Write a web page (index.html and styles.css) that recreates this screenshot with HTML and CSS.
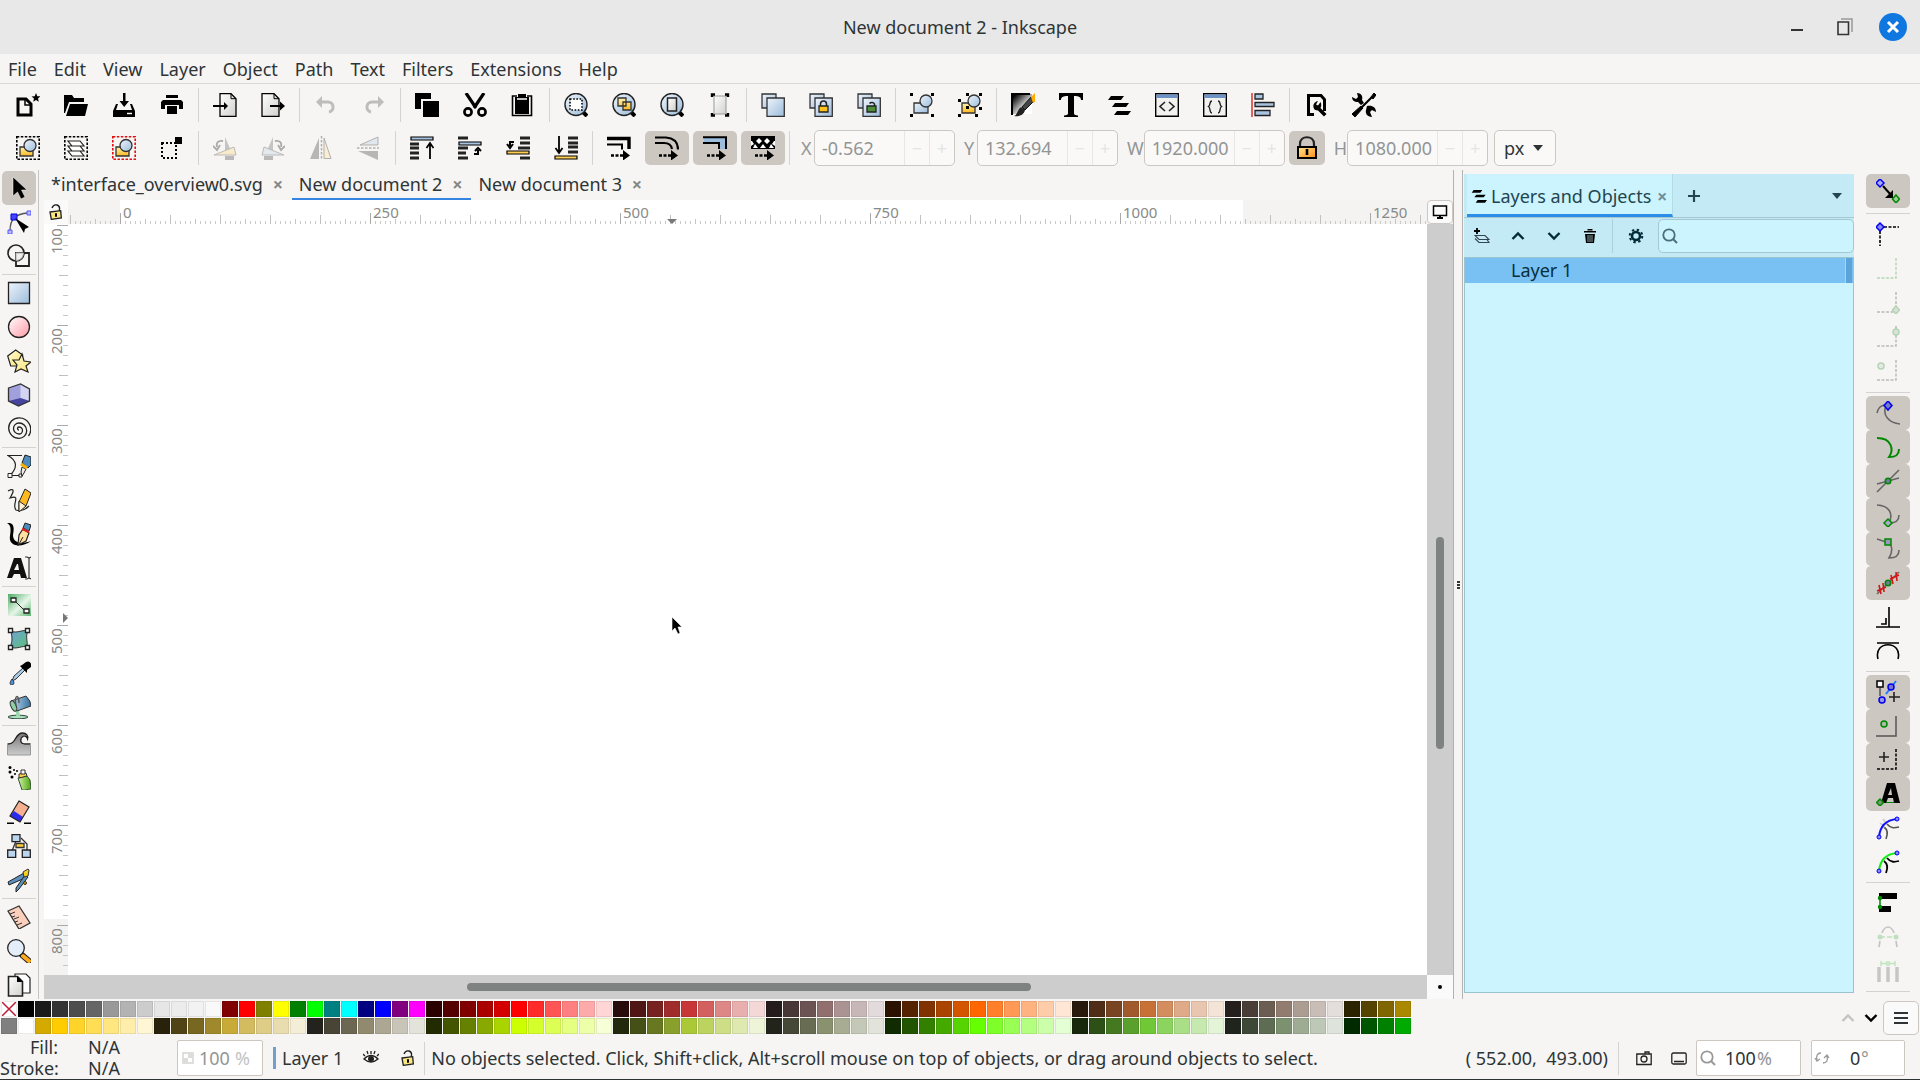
FILE: index.html
```html
<!DOCTYPE html>
<html lang="en">
<head>
  <meta charset="utf-8">
  <title>New document 2 - Inkscape</title>
  <link rel="stylesheet" href="styles.css">
</head>
<body>
  <svg class="defs" aria-hidden="true">
    <defs>
      <linearGradient id="gBlue" x1="0" y1="0" x2="1" y2="1"><stop offset="0" stop-color="#eef4fb"/><stop offset="1" stop-color="#9cbcdc"/></linearGradient>
      <linearGradient id="gPaper" x1="0" y1="0" x2="1" y2="1"><stop offset="0" stop-color="#fff"/><stop offset="1" stop-color="#d0d0cc"/></linearGradient>
      <linearGradient id="gPink" x1="0" y1="0" x2="1" y2="1"><stop offset="0" stop-color="#fff"/><stop offset="1" stop-color="#ff98a4"/></linearGradient>
      <linearGradient id="gGold" x1="0" y1="0" x2="0" y2="1"><stop offset="0" stop-color="#fff3b0"/><stop offset="1" stop-color="#ffb81c"/></linearGradient>
      <linearGradient id="gLock" x1="0" y1="0" x2="1" y2="1"><stop offset="0" stop-color="#ffe98a"/><stop offset="1" stop-color="#ff8c1a"/></linearGradient>
      <linearGradient id="gYel" x1="0" y1="0" x2="1" y2="1"><stop offset="0" stop-color="#fffbe0"/><stop offset="1" stop-color="#fbe36a"/></linearGradient>
      <linearGradient id="gGreen" x1="0" y1="0" x2="1" y2="1"><stop offset="0" stop-color="#4aae62"/><stop offset=".55" stop-color="#e8f6ea"/><stop offset="1" stop-color="#5cb870"/></linearGradient>
      <linearGradient id="gMesh" x1="0" y1="0" x2="1" y2="1"><stop offset="0" stop-color="#6fa3d8"/><stop offset="1" stop-color="#5cc07a"/></linearGradient>
      <linearGradient id="gPot" x1="0" y1="0" x2="1" y2="0"><stop offset="0" stop-color="#c3dcee"/><stop offset="1" stop-color="#34709f"/></linearGradient>
      <linearGradient id="gCan" x1="0" y1="0" x2="1" y2="0"><stop offset="0" stop-color="#d6f0b0"/><stop offset="1" stop-color="#4da80c"/></linearGradient>
      <linearGradient id="gGrey" x1="0" y1="0" x2="0" y2="1"><stop offset="0" stop-color="#777"/><stop offset="1" stop-color="#ccc"/></linearGradient>
      <linearGradient id="gInk" x1="1" y1="1" x2="0" y2="0"><stop offset=".3" stop-color="#fff"/><stop offset=".9" stop-color="#000"/></linearGradient>
    </defs>

    <symbol id="new" viewBox="0 0 24 24"><path d="M2 6h8l5 5v11H2z" fill="none" stroke="#000" stroke-width="3"/><path d="M9 5v7h7" fill="none" stroke="#000" stroke-width="1.5"/><path d="M20 0l1.3 3.2 3.2.2-2.5 2 .8 3.3L20 6.9l-2.8 1.8.8-3.3-2.5-2 3.2-.2z"/></symbol>
    <symbol id="open" viewBox="0 0 24 24"><path d="M0 2h8l2 3h10v4H5L1 20H0zM6 11h18l-3 12H2z"/></symbol>
    <symbol id="save" viewBox="0 0 24 24"><path d="M11 0h2.5v8H17l-4.8 6L7.5 8H11zM4 11h2l-2 6h16l-2-6h2l3 7v6H1v-6z"/><path d="M15 20.5h5" stroke="#fff" stroke-width="1.5"/></symbol>
    <symbol id="print" viewBox="0 0 24 24"><path d="M6 2h12v3H6zM3 7h18l2 2v7h-4v-4H5v4H1V9zM7 13h10v8H7z"/></symbol>
    <symbol id="import" viewBox="0 0 24 24"><path d="M7 .7h11l5 5V23.3H7z" fill="url(#gPaper)" stroke="#000" stroke-width="1.3"/><path d="M18 .7v5h5" fill="none" stroke="#000"/><path d="M0 13h12" stroke="#000" stroke-width="2"/><path d="M11 9l4 4-4 4z"/></symbol>
    <symbol id="export" viewBox="0 0 24 24"><path d="M1 .7h12l5 5V23.3H1z" fill="url(#gPaper)" stroke="#000" stroke-width="1.3"/><path d="M13 .7v5h5" fill="none" stroke="#000"/><path d="M9 13h11" stroke="#000" stroke-width="2"/><path d="M19 8.5l5 4.5-5 4.5z"/></symbol>
    <symbol id="undo" viewBox="0 0 24 24"><path d="M5 9h9c6 0 7 9 1 10" fill="none" stroke="#bdbdbb" stroke-width="3"/><path d="M2 9l6-6v12z" fill="#bdbdbb"/></symbol>
    <symbol id="redo" viewBox="0 0 24 24"><path d="M19 9h-9c-6 0-7 9-1 10" fill="none" stroke="#bdbdbb" stroke-width="3"/><path d="M22 9l-6-6v12z" fill="#bdbdbb"/></symbol>
    <symbol id="copy" viewBox="0 0 24 24"><path d="M0 0h16v6H6v10H0zM8 8h16v16H8z"/></symbol>
    <symbol id="cut" viewBox="0 0 24 24"><path d="M3 0l10 15M21 0L11 15" stroke="#000" stroke-width="3.2"/><circle cx="5" cy="19" r="3.6" fill="none" stroke="#000" stroke-width="2.6"/><circle cx="19" cy="19" r="3.6" fill="none" stroke="#000" stroke-width="2.6"/></symbol>
    <symbol id="paste" viewBox="0 0 24 24"><path d="M6 3H1.5v19.5h19V3H16" fill="none" stroke="#000" stroke-width="1.6"/><path d="M7 1h8v3h3v17H4V4h3z"/><path d="M6 6h10" stroke="#fff" stroke-width="1.5"/></symbol>

    <symbol id="lens" viewBox="0 0 24 24"><path d="M18 18l5 5" stroke="#000" stroke-width="4"/><circle cx="12" cy="11.5" r="11" fill="url(#gBlue)" stroke="#222" stroke-width="1.4"/></symbol>
    <symbol id="zoomsel" viewBox="0 0 24 24"><use href="#lens"/><path d="M6 6h12v11H6z" fill="#fff" stroke="#000" stroke-width="1.6" stroke-dasharray="1.6"/></symbol>
    <symbol id="zoomdraw" viewBox="0 0 24 24"><use href="#lens"/><path d="M6 5h8v8H6zM11 9h8v8h-8z" fill="url(#gGold)" stroke="#333" stroke-width="1.3"/></symbol>
    <symbol id="zoompage" viewBox="0 0 24 24"><use href="#lens"/><path d="M7.5 5h9v13h-9z" fill="url(#gPaper)" stroke="#222" stroke-width="1.5"/></symbol>
    <symbol id="pagewidth" viewBox="0 0 24 24"><path d="M6 3h12v18H6z" fill="url(#gPaper)" stroke="#999"/><path d="M4 4V1.5h3M20 4V1.5h-3M4 20v2.5h3M20 20v2.5h-3" fill="none" stroke="#000" stroke-width="2.4"/></symbol>
    <symbol id="dup" viewBox="0 0 24 24"><path d="M1 1h14v14H1z" fill="url(#gBlue)" stroke="#333" stroke-width="1.3"/><path d="M6 5h17.3v18.3H6z" fill="url(#gBlue)" stroke="#333" stroke-width="1.3"/></symbol>
    <symbol id="clone" viewBox="0 0 24 24"><use href="#dup"/><path d="M11.5 13v-2a3 3 0 016 0v2" fill="none" stroke="#222" stroke-width="1.5"/><path d="M10 13h9v6h-9z" fill="#ffc21a" stroke="#222" stroke-width="1.3"/></symbol>
    <symbol id="unclone" viewBox="0 0 24 24"><use href="#dup"/><path d="M12.5 10.5a3 3 0 015 .5v2" fill="none" stroke="#222" stroke-width="1.5"/><path d="M10 13h9v6h-9z" fill="#4e8f34" stroke="#222" stroke-width="1.3"/></symbol>
    <symbol id="corners" viewBox="0 0 24 24"><path d="M0 0h3v3H0zM21 0h3v3h-3zM0 21h3v3H0zM21 21h3v3h-3z"/></symbol>
    <symbol id="group" viewBox="0 0 24 24"><use href="#corners"/><path d="M4 10h14v10H4z" fill="url(#gBlue)" stroke="#333" stroke-width="1.3"/><circle cx="16" cy="8" r="6" fill="url(#gBlue)" stroke="#333" stroke-width="1.3"/></symbol>
    <symbol id="ungroup" viewBox="0 0 24 24"><path d="M8 0h3v3H8zM21 0h3v3h-3zM0 6h3v3H0zM0 21h3v3H0zM17 21h3v3h-3zM21 14h3v3h-3z"/><path d="M4 10h13v10H4z" fill="url(#gGold)" stroke="#333" stroke-width="1.3"/><circle cx="16" cy="8" r="6" fill="url(#gBlue)" stroke="#333" stroke-width="1.3"/><path d="M8 13h3v3H8z"/></symbol>
    <symbol id="fillstroke" viewBox="0 0 24 24"><path d="M1 1h20v20H1z" fill="url(#gInk)"/><path d="M1 22V1h18" fill="none" stroke="#000" stroke-width="2"/><path d="M20 4l3 4-9 9-3-3z" fill="#444" stroke="#111"/><path d="M20 4l4-4v9l-2 1z" fill="#ffac00"/><path d="M3 23c3 0 3-6 7-9l4 3c-1 5-6 7-11 6z" fill="#222"/></symbol>
    <symbol id="text" viewBox="0 0 24 24"><path d="M0 0h24v7h-2c0-3-2-4-7-4v17c0 2 1 2 4 2.5V24H5v-1.5c3-.5 4-.5 4-2.5V3C4 3 2 4 2 7H0z"/></symbol>
    <symbol id="layers" viewBox="0 0 24 24"><path d="M4 3h13l-3 4H1zM8 10h14l-3 4H5zM10 18h14l-3 4H7z"/></symbol>
    <symbol id="win" viewBox="0 0 24 24"><path d="M.7.7h22.6v22.6H.7z" fill="#f1f1ee" stroke="#000" stroke-width="1.4"/><path d="M1.4 1.4h21.2V5H1.4z" fill="#6d93c6"/></symbol>
    <symbol id="xml" viewBox="0 0 24 24"><use href="#win"/><path d="M10 9l-5 4.5 5 4.5M14 9l5 4.5-5 4.5" fill="none" stroke="#222" stroke-width="1.6"/></symbol>
    <symbol id="css" viewBox="0 0 24 24"><use href="#win"/><path d="M9 8C6 8 8 12 5.5 13.5 8 15 6 20 9 20M15 8c3 0 1 4 3.5 5.5C16 15 18 20 15 20" fill="none" stroke="#222" stroke-width="1.4"/></symbol>
    <symbol id="align" viewBox="0 0 24 24"><path d="M1 0v24" stroke="#d22" stroke-width="1.4"/><path d="M4 1h8v5H4zM4 9.5h19v4H4zM4 17.5h15v5H4z" fill="#a9c4e0" stroke="#222" stroke-width="1.3"/></symbol>
    <symbol id="docprefs" viewBox="0 0 24 24"><path d="M10 21.5H4.5v-19H17l3.5 4V18" fill="none" stroke="#000" stroke-width="3"/><path d="M14 8c-5 1-6 6-3 9l3 .5 6 6 2.5-2.5-6-6c1-2 1-4 0-6l-2.5 3.5-2-1z"/></symbol>
    <symbol id="prefs" viewBox="0 0 24 24"><path d="M8 16L20 4" stroke="#000" stroke-width="2.2"/><path d="M0 21l9-8 2 2-8 9zM19 4l3-4 2 2-3 4z" stroke="#000"/><path d="M5 0c5 0 6 4 5 7l2 3-3 2-3-3C2 9 0 7 0 4l4 2 2-2zM15 13c5-1 9 1 9 6l-4-2-2 2 2 5c-5 0-7-4-6-7z"/></symbol>

    <symbol id="dash" viewBox="0 0 24 24"><path d="M.8.8h22.4v22.4H.8z" fill="none" stroke="#000" stroke-width="1.6" stroke-dasharray="2.5 1.5"/></symbol>
    <symbol id="shapes" viewBox="0 0 24 24"><path d="M4 11h13v9H4z" fill="url(#gGold)" stroke="#333" stroke-width="1.3"/><circle cx="14" cy="9.5" r="6" fill="url(#gBlue)" stroke="#333" stroke-width="1.3"/></symbol>
    <symbol id="selall" viewBox="0 0 24 24"><use href="#dash"/><use href="#shapes"/></symbol>
    <symbol id="sellayers" viewBox="0 0 24 24"><use href="#dash"/><path d="M4 15h12l4 5H8zM4 10h12l4 5H8zM4 5h12l4 5H8z" fill="#fff" stroke="#222" stroke-width="1.2"/></symbol>
    <symbol id="touch" viewBox="0 0 24 24"><path d="M.8.8h22.4v22.4H.8z" fill="none" stroke="#e01010" stroke-width="1.6" stroke-dasharray="2.5 1.5"/><use href="#shapes"/></symbol>
    <symbol id="desel" viewBox="0 0 24 24"><path d="M2 7h14v15H2z" fill="none" stroke="#000" stroke-width="2" stroke-dasharray="2"/><path d="M15 1h7v7h-7z"/></symbol>
    <symbol id="rotl" viewBox="0 0 24 24"><g opacity=".3"><path d="M12 1l7 16h-7z" fill="#555"/><path d="M1 19l20-8 2 8z" fill="#ffd76a" stroke="#333"/><path d="M12 20h9v4h-9z" fill="#333"/><path d="M10 5C5 4 3 7 4 11M0 10l4 4 3-5" fill="none" stroke="#000" stroke-width="1.8"/></g></symbol>
    <symbol id="rotr" viewBox="0 0 24 24"><g opacity=".3"><path d="M12 1L5 17h7z" fill="#555"/><path d="M23 19L3 11l-2 8z" fill="#b8cee6" stroke="#333"/><path d="M3 20h9v4H3z" fill="#333"/><path d="M14 5c5-1 7 2 6 6M24 10l-4 4-3-5" fill="none" stroke="#000" stroke-width="1.8"/></g></symbol>
    <symbol id="fliph" viewBox="0 0 24 24"><g opacity=".35"><path d="M10 2v21H1z" fill="#444"/><path d="M15 2v20.5h7z" fill="#ffe39a" stroke="#333"/><path d="M12.5 0v24" stroke="#333" stroke-width="1.5" stroke-dasharray="2.5 1.5"/></g></symbol>
    <symbol id="flipv" viewBox="0 0 24 24"><g opacity=".35"><path d="M21 1v8H3z" fill="#b8cee6" stroke="#333"/><path d="M21 15v9L1 15z" fill="#444"/><path d="M0 12h22" stroke="#333" stroke-width="1.5" stroke-dasharray="2.5 1.5"/></g></symbol>
    <symbol id="top" viewBox="0 0 24 24"><path d="M1 1h22v3H1z" fill="#a9c4e0" stroke="#000" stroke-width="1.2"/><path d="M0 8h9M0 12h9M0 17h9M0 22h9" stroke="#222" stroke-width="2.8"/><path d="M20 8v15M16.5 12L20 7l3.5 5" fill="none" stroke="#000" stroke-width="1.8"/></symbol>
    <symbol id="raise" viewBox="0 0 24 24"><path d="M0 2h10M0 12h10M0 17h8M0 22h10" stroke="#222" stroke-width="2.8"/><path d="M1 6h22v3H1z" fill="#a9c4e0" stroke="#000" stroke-width="1.2"/><path d="M16 18h4v-4M17 15l3-3 3 3" fill="none" stroke="#000" stroke-width="2"/></symbol>
    <symbol id="lower" viewBox="0 0 24 24"><path d="M14 2h10M14 7h10M12 12h12M14 22h10" stroke="#222" stroke-width="2.8"/><path d="M1 15h22v3H1z" fill="#ffcf55" stroke="#000" stroke-width="1.2"/><path d="M8 6H4v4M1 8l3 4 3-4" fill="none" stroke="#000" stroke-width="2"/></symbol>
    <symbol id="bottom" viewBox="0 0 24 24"><path d="M14 2h10M14 7h10M14 11h10M14 16h10" stroke="#222" stroke-width="2.8"/><path d="M1 20h22v3H1z" fill="#ffcf55" stroke="#000" stroke-width="1.2"/><path d="M5 0v16M1.5 12L5 17l3.5-5" fill="none" stroke="#000" stroke-width="1.8"/></symbol>
    <symbol id="arr" viewBox="0 0 24 24"><path d="M4 19.5h13" stroke="#000" stroke-width="2.4" stroke-dasharray="3 1.5"/><path d="M16 14l7 5.5-7 5z"/></symbol>
    <symbol id="scstroke" viewBox="0 0 24 24"><use href="#arr"/><path d="M0 2.5h22V13" fill="none" stroke="#000" stroke-width="3.4"/><path d="M0 8.5h15v5" fill="none" stroke="#000" stroke-width="2"/></symbol>
    <symbol id="sccorner" viewBox="0 0 24 24"><use href="#arr"/><path d="M0 1.5h11q12 1 12 12M0 7h9q7 0 8 6" fill="none" stroke="#000" stroke-width="2.2"/></symbol>
    <symbol id="scgrad" viewBox="0 0 24 24"><use href="#arr"/><path d="M1 1h22v12h-6V7H1z" fill="#9cbddc"/><path d="M0 1.3h23V13M0 7h16v6" fill="none" stroke="#000" stroke-width="2"/></symbol>
    <symbol id="scpat" viewBox="0 0 24 24"><use href="#arr"/><path d="M0 0h24v13H0z"/><path d="M8 2l3 3-3 3-3-3zM16 2l3 3-3 3-3-3zM1 5l2 3-3 2V5zM23 5l-2 3 3 2V5zM4 8l3 4H2zM12 8l3 4H9zM20 8l3 4h-5z" fill="#fff"/></symbol>
    <symbol id="lock" viewBox="0 0 24 24"><path d="M5 10V8c0-9 14-9 14 0v2" fill="none" stroke="#222" stroke-width="2.2"/><path d="M3 11h18v11H3z" fill="url(#gLock)" stroke="#000" stroke-width="2"/><path d="M12 13v6" stroke="#000" stroke-width="2.6"/></symbol>
    <symbol id="unlock" viewBox="0 0 24 24"><path d="M6 6c3-8 13-5 11 3v3" fill="none" stroke="#222" stroke-width="2"/><path d="M3 12l16-2 1 11-15 2z" fill="#fbe682" stroke="#222" stroke-width="2"/><path d="M12 14v5" stroke="#000" stroke-width="3"/></symbol>

    <symbol id="pick" viewBox="0 0 24 24"><path d="M6 1v19l4.5-4 3.5 7 4-2-3.5-7H20z" stroke="#fff" stroke-width=".5"/></symbol>
    <symbol id="node" viewBox="0 0 24 24"><path d="M3 21C3 8 9 4 21 3" fill="none" stroke="#555" stroke-width="1.3"/><path d="M20 1h4v4h-4zM1 20h4v4H1z" fill="#bbf" stroke="#55f"/><path d="M4 4h6v6H4z" fill="#44f" stroke="#00d"/><path d="M8 8l14 9-4 2-1 4z"/></symbol>
    <symbol id="shapeb" viewBox="0 0 24 24"><path d="M9 9h13v13H9z" fill="none" stroke="#222" stroke-width="1.8"/><circle cx="9" cy="9" r="8" fill="none" stroke="#222" stroke-width="1.6"/><path d="M9 9h7.5Q16 16 9 16.5z" fill="#eee" stroke="#aaa"/></symbol>
    <symbol id="rect" viewBox="0 0 24 24"><path d="M1.5 1.5h21v21h-21z" fill="url(#gBlue)" stroke="#222" stroke-width="1.3"/></symbol>
    <symbol id="circ" viewBox="0 0 24 24"><circle cx="12" cy="12" r="10.5" fill="url(#gPink)" stroke="#222" stroke-width="1.3"/></symbol>
    <symbol id="star" viewBox="0 0 24 24"><path d="M.7 7l8-6 7 5-2 11-10 0z" fill="url(#gYel)" stroke="#222" stroke-width="1.2"/><path d="M15 5l2 7 7 1-5 4 2 6-7-3-6 3 2-7-4-5 6 0z" fill="url(#gYel)" stroke="#222" stroke-width="1.2"/></symbol>
    <symbol id="cube" viewBox="0 0 24 24"><path d="M1.5 5l12-4 9 5v12l-11 5-10-5z" fill="#a4a4dd"/><path d="M13.5 1v14l-12 3V5z" fill="#a0a0dc"/><path d="M13.5 1l9 5v12l-9-3z" fill="#d4d4f2"/><path d="M1.5 18l12-3 9 3-11 5z" fill="#4545a0"/><path d="M1.5 5l12-4 9 5v12l-11 5-10-5z" fill="none" stroke="#333" stroke-width="1.3"/></symbol>
    <symbol id="spiral" viewBox="0 0 24 24"><path d="M12 13A1.5 1.5 0 0 1 12 10A3.5 3.5 0 0 1 12 17A5.5 5.5 0 0 1 12 6A7.7 7.7 0 0 1 12 21.4A10.3 10.3 0 0 1 12 .8A11.5 11.5 0 0 1 21.5 19" fill="none" stroke="#222" stroke-width="1.3"/></symbol>
    <symbol id="pen" viewBox="0 0 24 24"><path d="M15 1.5H1c9 5 10 12 2 20h13" fill="none" stroke="#222" stroke-width="1.2"/><path d="M1 19.5h4v4H1zM12 20h3v3h-3z" fill="#fff" stroke="#222"/><path d="M15 9l3-8 6 2v8l-3 3z" fill="#4d8bbd" stroke="#222"/><path d="M15 13l4 2-2 4-2 3-1-4z" fill="#eee" stroke="#222"/><path d="M14 10l6 4" stroke="#f5b000" stroke-width="3"/></symbol>
    <symbol id="pencil" viewBox="0 0 24 24"><path d="M1 3c8-4 5 2 2 7 12-4 1 7 6 12 5 2 9 0 13-4" fill="none" stroke="#222" stroke-width="1.2"/><path d="M12 14l6-13 6 4-5 13-7 5z" fill="#ffba22" stroke="#222"/><path d="M12 13l7 5-7 6z" fill="#fff1d0" stroke="#222"/></symbol>
    <symbol id="callig" viewBox="0 0 24 24"><path d="M0 1c8-1 7 6 6 12 0 9 10 9 18 6-9 7-23 6-21-5C4 7 4 3 0 1z"/><path d="M16 7l6 4-3 8-8 4 1-10z" fill="#ffe0a0" stroke="#222" stroke-width="1.2"/><path d="M18 1l6 2-2 6-6-3z" fill="#4d8bbd" stroke="#222"/><path d="M15 7l7 3" stroke="#d22" stroke-width="2"/><path d="M12 22l4-7" stroke="#222"/></symbol>
    <symbol id="bigA" viewBox="0 0 24 24"><path fill-rule="evenodd" d="M7 2h7l6 20h-6l-1-4H7l-2 4H0zM10 8l-3 6h5l-1-6z" fill="#111"/></symbol>
    <symbol id="texttool" viewBox="0 0 24 24"><use href="#bigA"/><path d="M18 1h2l2 1 2-1M22 2v20M18 23h2l2-1 2 1" fill="none" stroke="#333" stroke-width="1.2"/></symbol>
    <symbol id="grad" viewBox="0 0 24 24"><path d="M1 1h23v22H1z" fill="url(#gGreen)"/><path d="M7 7l11 11" stroke="#222"/><path d="M4 5h5v4H4zM17 16h5v4h-5z" fill="#fff" stroke="#222" stroke-width="1.3"/></symbol>
    <symbol id="mesh" viewBox="0 0 24 24"><path d="M4 4c6 3 12-2 17 0-3 6 0 10-1 16-5-2-10 3-17 0 3-6 2-10 1-16z" fill="url(#gMesh)" stroke="#333"/><path d="M1.5 1.5h4v4h-4zM18.5 1.5h4v4h-4zM1.5 18.5h4v4h-4zM18.5 18.5h4v4h-4z" fill="#fff" stroke="#222" stroke-width="1.4"/></symbol>
    <symbol id="dropper" viewBox="0 0 24 24"><path d="M7 15l9-8 2 2-9 9-4 2z" fill="#a9cbe8" stroke="#333"/><path d="M13 5l2-1 4-3c4-2 6 2 5 5l-4 3v3z"/><path d="M5 18c-3 4-2 6 0 6s3-3 0-6z" fill="#4a90d9" stroke="#333"/></symbol>
    <symbol id="bucket" viewBox="0 0 24 24"><ellipse cx="11" cy="22" rx="10" ry="1.8" fill="#a8e0b8" stroke="#344"/><path d="M9 15h3l1 6H9z" fill="#9cd8ae"/><path d="M4 6l15-5q5 5 5 10L10 16Q4 13 4 6z" fill="url(#gPot)" stroke="#333"/><ellipse cx="6.5" cy="11" rx="2.5" ry="5.5" fill="#8ed0a4" stroke="#333" transform="rotate(-25 6.5 11)"/><path d="M9 11C7 -1 12 -1 12 8" fill="none" stroke="#555" stroke-width="1.5"/></symbol>
    <symbol id="tweak" viewBox="0 0 24 24"><path d="M.5 13c10 0 7-12 15-12 4 0 5 3 5 6l-2-3c-4-1-6 4-3 9h8v10H.5z" fill="url(#gGrey)"/><path d="M.5 12c9 1 7-11 15-11 4 0 6 3 5 6-1-3-4-4-6-1s0 6 3 6h6" fill="none" stroke="#222" stroke-width="1.4"/><path d="M19 8c1-3-3-4-4-1" fill="none" stroke="#fff"/><path d="M.5 13v10h23V13" fill="none" stroke="#999"/></symbol>
    <symbol id="spray" viewBox="0 0 24 24"><path d="M11 12l9-2 3 4 1 9c-4 0-6 2-9 1z" fill="url(#gCan)" stroke="#353"/><path d="M12 8l7-1 1 3-8 2z" fill="#ffd24d" stroke="#333"/><path d="M14 4h4v4h-4z" fill="#fff" stroke="#333"/><g><circle cx="3" cy="1.5" r="1.5"/><circle cx="3" cy="6" r="1.5"/><circle cx="5" cy="11" r="1.5"/><circle cx="7" cy="4" r="1"/><circle cx="10" cy="5" r="1"/><circle cx="8" cy="8" r="1"/></g></symbol>
    <symbol id="eraser" viewBox="0 0 24 24"><path d="M12 1l10 6-9 15-10-6z" fill="#f5b090"/><path d="M7 11l9 6-3 5-10-6z" fill="#2b2bf0"/><path d="M12 1l10 6-9 15-10-6z" fill="none" stroke="#222" stroke-width="1.2"/><path d="M0 23.3h7M17 23.3h7" stroke="#000" stroke-width="1.5"/></symbol>
    <symbol id="connector" viewBox="0 0 24 24"><path d="M9 7L5 17M14 4l6 6v7" fill="none" stroke="#333" stroke-width="1.3"/><path d="M5 .7h8v7H5zM.7 16h8v7.3h-8zM15.3 16h8v7.3h-8z" fill="#bcd5ee" stroke="#222" stroke-width="1.3"/><path d="M9 9.5h8v4H9z" fill="#ffcf40" stroke="#333" stroke-width="1.3"/></symbol>
    <symbol id="lpe" viewBox="0 0 24 24"><path d="M17 5L1 14l1 3 16-7z" fill="#5b90bf" stroke="#222"/><path d="M18 7L9 20l0 4 3-3 9-12z" fill="#5b90bf" stroke="#222"/><path d="M16 4l5-3 1 1-1 6-4 1z" fill="#f5d020" stroke="#333"/><circle cx="18" cy="15" r="1.5" fill="#c8a010" stroke="#432"/></symbol>
    <symbol id="ruler" viewBox="0 0 24 24"><path d="M1 6l11-5 11 17-11 6z" fill="#fbd0bd" stroke="#333" stroke-width="1.3"/><path d="M3 9l5-2M5 12l3-1M7 14l5-2M8 17l3-1M10 20l5-2" stroke="#333"/></symbol>
    <symbol id="zoom" viewBox="0 0 24 24"><path d="M15 16l7 6" stroke="#222" stroke-width="6" stroke-linecap="round"/><path d="M16 17l6 5" stroke="#ffab20" stroke-width="4" stroke-linecap="round"/><circle cx="9" cy="9" r="8.3" fill="#e3eef8" stroke="#222" stroke-width="1.3"/></symbol>
    <symbol id="pages" viewBox="0 0 24 24"><path d="M8 1h11l4 4v15H8z" fill="#fff" stroke="#222" stroke-width="1.2"/><path d="M1.5 3.5h9l5 5V23h-14z" fill="url(#gPaper)" stroke="#222" stroke-width="1.6"/><path d="M10 3v6h6z"/></symbol>

    <symbol id="s-main" viewBox="0 0 24 24"><path d="M7 7l8 9" stroke="#000" stroke-width="2"/><path d="M17 11v8h-8z"/><path d="M4 0l4 4-4 4-4-4z" fill="#aaf" stroke="#00e" stroke-width="1.5"/><path d="M20 16l3.5 4-3.5 4-3.5-4z" fill="#9c9" stroke="#080" stroke-width="1.5"/></symbol>
    <symbol id="s-bbox" viewBox="0 0 24 24"><path d="M8 5h15M4 9v15" stroke="#000" stroke-width="1.6" stroke-dasharray="3 1.5"/><path d="M4 1l4 4-4 4-4-4z" fill="#88f" stroke="#00e" stroke-width="1.5"/></symbol>
    <symbol id="s-edge" viewBox="0 0 24 24"><path d="M20 2v20H0" fill="none" stroke="#b5d8b5" stroke-width="1.5" stroke-dasharray="3 1.5"/></symbol>
    <symbol id="s-corner" viewBox="0 0 24 24"><path d="M20 2v20H0" fill="none" stroke="#bbb" stroke-width="1.5" stroke-dasharray="3 1.5"/></symbol>
    <symbol id="s-bc" viewBox="0 0 24 24"><use href="#s-corner"/><path d="M20 16l3.5 4-3.5 4-3.5-4z" fill="#dedede" stroke="#b2d6b2" stroke-width="1.5"/></symbol>
    <symbol id="s-bm" viewBox="0 0 24 24"><use href="#s-corner"/><circle cx="20" cy="8" r="3" fill="#dedede" stroke="#b2d6b2" stroke-width="1.5"/></symbol>
    <symbol id="s-bctr" viewBox="0 0 24 24"><use href="#s-corner"/><circle cx="5" cy="8" r="3" fill="#e8e8e8" stroke="#b2d6b2" stroke-width="1.5"/></symbol>
    <symbol id="s-nodes" viewBox="0 0 24 24"><path d="M1 12c2-8 7-9 11-6M10 5c-4 9 3 17 14 18" fill="none" stroke="#666" stroke-width="1.6"/><path d="M12 0l4 4.5-4 4.5-4-4.5z" fill="#77c" stroke="#00e" stroke-width="1.5"/></symbol>
    <symbol id="s-path" viewBox="0 0 24 24"><path d="M1 3c15 0 17 12 12 19 7 0 10-2 10-8" fill="none" stroke="#080" stroke-width="2"/></symbol>
    <symbol id="s-int" viewBox="0 0 24 24"><path d="M1 23L23 1M1 15l22-6" stroke="#666" stroke-width="1.6"/><circle cx="12" cy="12" r="2.7" fill="#77a" stroke="#080" stroke-width="1.6"/></symbol>
    <symbol id="s-cusp" viewBox="0 0 24 24"><path d="M1 2c14 1 16 10 12 18 7 0 10-2 10-8" fill="none" stroke="#666" stroke-width="1.6"/><path d="M12 16l4 4-4 4-4-4z" fill="#aac" stroke="#080" stroke-width="1.5"/></symbol>
    <symbol id="s-smooth" viewBox="0 0 24 24"><path d="M1 2l9 3c7 2 7 9 3 16 7 0 10-2 10-8" fill="none" stroke="#666" stroke-width="1.6"/><path d="M9 2h6v6H9z" fill="#99b" stroke="#080" stroke-width="1.5"/></symbol>
    <symbol id="s-mid" viewBox="0 0 24 24"><path d="M1 23L23 1" stroke="#666" stroke-width="1.6"/><path d="M3 14l2 9M7 12l1 9M1 20l9-4M15 4l2 9M20 1l1 9M14 8l9-4" stroke="#d01818" stroke-width="1.6"/><circle cx="12" cy="12" r="2.7" fill="#77a" stroke="#080" stroke-width="1.6"/></symbol>
    <symbol id="s-perp" viewBox="0 0 24 24"><path d="M0 22h24M13 2v20M5 19h5v-6" fill="none" stroke="#000" stroke-width="1.6"/></symbol>
    <symbol id="s-tan" viewBox="0 0 24 24"><path d="M1 4h22M2 20C-3 1 27 1 22 20" fill="none" stroke="#000" stroke-width="1.6"/></symbol>
    <symbol id="s-other" viewBox="0 0 24 24"><path d="M4 5v11" stroke="#555" stroke-width="1.5"/><path d="M1 1h6v6H1z" fill="#fff" stroke="#000" stroke-width="1.5"/><path d="M10 14L20 1" stroke="#27f" stroke-width="2"/><circle cx="15" cy="7" r="3" fill="#77c" stroke="#00e" stroke-width="1.5"/><circle cx="6" cy="20" r="3" fill="#99d" stroke="#00e" stroke-width="1.5"/><path d="M18 12v10M13 17h11" stroke="#222" stroke-width="1.6"/></symbol>
    <symbol id="s-obj" viewBox="0 0 24 24"><path d="M20 2v20H0" fill="none" stroke="#555" stroke-width="1.5"/><circle cx="8" cy="10" r="3" fill="#aba" stroke="#080" stroke-width="1.5"/></symbol>
    <symbol id="s-rot" viewBox="0 0 24 24"><path d="M20 1v20H0" fill="none" stroke="#000" stroke-width="1.5" stroke-dasharray="3 1.5"/><path d="M8 4v10M3 9h10" stroke="#222" stroke-width="1.6"/></symbol>
    <symbol id="s-text" viewBox="0 0 24 24"><path d="M7 20.5h17" stroke="#080"/><path fill-rule="evenodd" d="M11 1h8l5 20h-6l-1-5h-5l-2 5H5zM15 6l-3 7h4z"/><path d="M4 17l3.5 3.5L4 24 .5 20.5z" fill="#797" stroke="#080" stroke-width="1.5"/></symbol>
    <symbol id="s-clip" viewBox="0 0 24 24"><path d="M8 11c4 3 4 7 2 12M11 8c4 5 8 4 12 3" fill="none" stroke="#555" stroke-width="1.6"/><path d="M4 7l5 4M7 3l4 5" stroke="#ccc" stroke-width="1.6"/><path d="M3 21C4 10 10 4 21 3" fill="none" stroke="#11f" stroke-width="2"/><circle cx="21" cy="3" r="2" fill="#88f" stroke="#00e"/><circle cx="3" cy="21" r="2" fill="#88f" stroke="#00e"/></symbol>
    <symbol id="s-mask" viewBox="0 0 24 24"><path d="M8 11c4 3 4 7 2 12M11 8c4 5 8 4 12 3" fill="none" stroke="#000" stroke-width="1.8"/><path d="M3 21C4 10 10 4 21 3" fill="none" stroke="#1e1" stroke-width="2"/><circle cx="21" cy="3" r="2" fill="#88f" stroke="#00e"/><circle cx="3" cy="21" r="2" fill="#88f" stroke="#00e"/></symbol>
    <symbol id="s-al1" viewBox="0 0 24 24"><path d="M3 2h18v6H3zM3 15h12v6H3z"/><path d="M4 7v9" stroke="#080" stroke-width="1.5"/><circle cx="4" cy="7" r="2.2" fill="#080"/><circle cx="4" cy="16" r="2.2" fill="#080"/></symbol>
    <symbol id="s-al2" viewBox="0 0 24 24"><path d="M3 22l1-6M6 8C9 0 15 0 18 8M20 16l1 6" fill="none" stroke="#c4c4c4" stroke-width="1.7"/><path d="M4 12h16" stroke="#bfe0bf" stroke-width="1.6" stroke-dasharray="5 2"/><circle cx="4" cy="12" r="2.5" fill="#bfe0bf"/><circle cx="20" cy="12" r="2.5" fill="#bfe0bf"/></symbol>
    <symbol id="s-al3" viewBox="0 0 24 24"><path d="M3 8v15M12 8v15M21 8v15" stroke="#c6c6c6" stroke-width="3.5"/><path d="M5 2v5M11 2v5M13 2v5M19 2v5M5 4.5h6M13 4.5h6" stroke="#bfe5bf" stroke-width="1.5"/></symbol>

    <symbol id="monitor" viewBox="0 0 16 16"><path d="M1.5 2h13v9.5h-13z" fill="none" stroke="#000" stroke-width="1.5"/><path d="M5 13h6v2H5zM7 11h2v3H7z"/></symbol>
    <symbol id="addlayer" viewBox="0 0 16 16"><path d="M3 0v6M0 3h6" stroke="#000" stroke-width="1.8"/><path d="M1 7.5h10l4 4H5zM1 10.5l4 4h10l-2-3" fill="none" stroke="#345" stroke-width="1.1"/></symbol>
    <symbol id="up" viewBox="0 0 16 16"><path d="M2.5 11L8 5.5l5.5 5.5" fill="none" stroke="currentColor" stroke-width="2.4"/></symbol>
    <symbol id="down" viewBox="0 0 16 16"><path d="M2.5 5L8 10.5 13.5 5" fill="none" stroke="currentColor" stroke-width="2.4"/></symbol>
    <symbol id="trash" viewBox="0 0 16 16"><path d="M2 3h12v1.5H2zM5.5 2.5V1h5v1.5M3 6h10l-1 9H4z"/><path d="M6 7v7M8 7v7M10 7v7" stroke="#c4eaf5" stroke-width=".7"/></symbol>
    <symbol id="gear" viewBox="0 0 16 16"><circle cx="8" cy="8" r="4" fill="none" stroke="#002b36" stroke-width="2.6"/><circle cx="8" cy="8" r="6.3" fill="none" stroke="#002b36" stroke-width="2" stroke-dasharray="2.4 2.548"/></symbol>
    <symbol id="search" viewBox="0 0 16 16"><circle cx="7" cy="7" r="5.7" fill="none" stroke="currentColor" stroke-width="1.8"/><path d="M11 11l4 4" stroke="currentColor" stroke-width="2"/></symbol>
    <symbol id="camera" viewBox="0 0 16 16"><path d="M.8 4h14.4v10.5H.8zM9 3.5V2h4v1.5" fill="none" stroke="#222" stroke-width="1.3"/><circle cx="8" cy="9" r="3" fill="none" stroke="#222" stroke-width="1.3"/></symbol>
    <symbol id="frame" viewBox="0 0 16 16"><rect x=".8" y="3" width="14.4" height="11" rx="1.5" fill="none" stroke="#222" stroke-width="1.3"/><path d="M3 11.5h10" stroke="#222" stroke-width="1.5"/></symbol>
    <symbol id="rotate" viewBox="0 0 16 16"><path d="M7 3C3 3 2 6 3 10M1 8l2 3 3-2M9 13c4 0 5-3 4-7M10 8l3-3 2 3" fill="none" stroke="#999" stroke-width="1.3"/></symbol>
    <symbol id="eye" viewBox="0 0 16 16"><path d="M1 9q7-7 14 0-7 6-14 0z" fill="#fff" stroke="#222" stroke-width="1.4"/><circle cx="8" cy="9" r="3" fill="#222"/><path d="M2 6L0 4M5 4L4 1M8 4V1M11 4l1-3M14 6l2-2" stroke="#222" stroke-width="1.3"/></symbol>
    <symbol id="menu" viewBox="0 0 16 16"><path d="M1 3h14M1 8h14M1 13h14" stroke="#2e3436" stroke-width="2"/></symbol>
    <symbol id="opac" viewBox="0 0 16 16"><path d="M3 3h10v10H3z" fill="#fff" stroke="#d5d5d3" stroke-width="1.5"/><path d="M8 3h5v5H8zM3 8h5v5H3z" fill="#dcdcda"/></symbol>
  </svg>

  <div class="app">
    <header class="titlebar">
      <span class="title">New document 2 - Inkscape</span>
      <div class="winbtns">
        <button aria-label="Minimize"><svg width="14" height="14" viewBox="0 0 14 14"><path d="M1 10h12" stroke="#333" stroke-width="2"/></svg></button>
        <button aria-label="Restore"><svg width="16" height="18" viewBox="0 0 16 18"><path d="M4 1h11v13" fill="none" stroke="#999" stroke-width="1.5"/><path d="M1 4h10.5v12.5H1z" fill="none" stroke="#333" stroke-width="1.6"/></svg></button>
        <button class="close" aria-label="Close"><svg width="14" height="14" viewBox="0 0 14 14"><path d="M2 2l10 10M12 2L2 12" stroke="#fff" stroke-width="3"/></svg></button>
      </div>
    </header>

    <nav class="menubar">
      <button>File</button><button>Edit</button><button>View</button><button>Layer</button><button>Object</button><button>Path</button><button>Text</button><button>Filters</button><button>Extensions</button><button>Help</button>
    </nav>

    <div class="toolbar commands" data-icons="new open save print | import export | undo redo | copy cut paste | zoomsel zoomdraw zoompage pagewidth | dup clone unclone | group ungroup | fillstroke text layers xml css align | docprefs prefs"></div>

    <div class="toolbar options">
      <div class="toolbar" data-icons="selall sellayers touch desel | rotl rotr fliph flipv | top raise lower bottom | scstroke sccorner* scgrad* scpat* |"></div>
      <label class="spin"><span>X</span><span class="box"><input value="-0.562" disabled><button disabled>−</button><button disabled>+</button></span></label>
      <label class="spin"><span>Y</span><span class="box"><input value="132.694" disabled><button disabled>−</button><button disabled>+</button></span></label>
      <label class="spin"><span>W</span><span class="box"><input value="1920.000" disabled><button disabled>−</button><button disabled>+</button></span></label>
      <button class="lockbtn" aria-label="Lock width and height"><svg class="icon"><use href="#lock"/></svg></button>
      <label class="spin"><span>H</span><span class="box"><input value="1080.000" disabled><button disabled>−</button><button disabled>+</button></span></label>
      <select class="unit" aria-label="Units"><option>px</option></select>
    </div>

    <main class="main">
      <div class="toolbox" data-icons="pick* node shapeb | rect circ star cube spiral | pen pencil callig texttool | grad mesh dropper bucket | tweak spray eraser connector lpe | ruler zoom pages"></div>

      <section class="desk">
        <div class="tabs">
          <div class="tab">*interface_overview0.svg<button aria-label="Close tab">×</button></div>
          <div class="tab active">New document 2<button aria-label="Close tab">×</button></div>
          <div class="tab">New document 3<button aria-label="Close tab">×</button></div>
        </div>
        <button class="guidelock" aria-label="Lock guides"><svg class="small"><use href="#unlock"/></svg></button>
        <div class="hruler" id="hruler"><svg class="hmark" viewBox="0 0 10 5"><path d="M0 0h10L5 5z" fill="#777"/></svg></div>
        <button class="display" aria-label="Display mode"><svg class="small"><use href="#monitor"/></svg></button>
        <div class="vruler" id="vruler"><svg class="vmark" viewBox="0 0 5 10"><path d="M0 0v10L5 5z" fill="#777"/></svg></div>
        <div class="canvas"><svg class="cursor" viewBox="0 0 12 19"><path d="M1 1v14l3-3 3 6 2-1-2-6h4z" stroke="#fff" stroke-width=".6"/></svg></div>
        <div class="vscroll"><div></div></div>
        <div class="hscroll"><div></div></div>
        <div class="corner"><i></i></div>
      </section>

      <div class="splitter"><i></i><i></i><i></i></div>

      <aside class="panel">
        <div class="ptabs">
          <div class="ptab"><svg class="small"><use href="#layers"/></svg>Layers and Objects<button aria-label="Close panel">×</button></div>
          <button class="plus" aria-label="Add panel"><svg class="small" viewBox="0 0 16 16"><path d="M8 2v12M2 8h12" stroke="#23454f" stroke-width="2.2"/></svg></button>
          <button class="more" aria-label="Panel menu"><svg width="10" height="6" viewBox="0 0 10 6"><path d="M0 0h10L5 6z" fill="#23454f"/></svg></button>
        </div>
        <div class="ptools">
          <button aria-label="Add layer"><svg class="small"><use href="#addlayer"/></svg></button>
          <button aria-label="Raise"><svg class="small"><use href="#up"/></svg></button>
          <button aria-label="Lower"><svg class="small"><use href="#down"/></svg></button>
          <button aria-label="Delete"><svg class="small"><use href="#trash"/></svg></button>
          <span class="psep"></span>
          <button class="cog" aria-label="Settings"><svg class="small"><use href="#gear"/></svg></button>
          <label class="search"><svg class="small"><use href="#search"/></svg><input type="text" aria-label="Search"></label>
        </div>
        <div class="list"><div class="row"><span>Layer 1</span><i></i></div></div>
      </aside>

      <div class="snapbar" data-icons="s-main* || s-bbox s-edge s-bc s-bm s-bctr || s-nodes* s-path* s-int* s-cusp* s-smooth* s-mid* s-perp s-tan | s-other* s-obj* s-rot* s-text* s-clip s-mask | s-al1 s-al2 s-al3 |"></div>
    </main>

    <div class="palette">
      <div class="swatches" id="swatches"></div>
      <div class="palbtns">
        <button class="off" aria-label="Scroll up"><svg class="small"><use href="#up"/></svg></button>
        <button class="pdown" aria-label="Scroll down"><svg class="small"><use href="#down"/></svg></button>
        <button class="burger" aria-label="Palette menu"><svg class="small"><use href="#menu"/></svg></button>
      </div>
    </div>

    <footer class="status">
      <div class="style"><span>Fill:</span><span>N/A</span><span>Stroke:</span><span>N/A</span></div>
      <label class="field opacity"><svg class="small"><use href="#opac"/></svg><input value="100" aria-label="Opacity" disabled><em>%</em></label>
      <button class="layer">Layer 1</button>
      <button class="eye" aria-label="Toggle visibility"><svg class="small"><use href="#eye"/></svg></button>
      <button aria-label="Toggle lock"><svg class="small"><use href="#unlock"/></svg></button>
      <span class="ssep"></span>
      <span class="msg">No objects selected. Click, Shift+click, Alt+scroll mouse on top of objects, or drag around objects to select.</span>
      <span class="coords">( 552.00, &nbsp;493.00)</span>
      <span class="ssep"></span>
      <button class="cam" aria-label="Quick zoom"><svg class="small"><use href="#camera"/></svg></button>
      <button class="cam" aria-label="Canvas view"><svg class="small"><use href="#frame"/></svg></button>
      <label class="field zoomf"><svg class="small"><use href="#search"/></svg><input value="100" aria-label="Zoom"><em>%</em></label>
      <label class="field rotf"><svg class="small"><use href="#rotate"/></svg><input value="0" aria-label="Rotation"><em>°</em></label>
    </footer>
  </div>
  <script src="script.js"></script>
</body>
</html>
```
FILE: styles.css
```css
* {
  box-sizing: border-box;
}

body {
  margin: 0;
  background: #f6f5f3;
  color: #2e3436;
  font-family: "Noto Sans", "Open Sans", sans-serif;
  font-size: 18px;
  line-height: 24px;
}

button, input, select {
  font: inherit;
  color: inherit;
}

button {
  display: flex;
  align-items: center;
  justify-content: center;
  border: none;
  background: none;
  padding: 0;
}

svg {
  display: block;
  flex: none;
}

.defs {
  position: absolute;
  width: 0;
  height: 0;
}

.icon {
  width: 24px;
  height: 24px;
}

.small {
  width: 16px;
  height: 16px;
}

.app {
  display: flex;
  flex-direction: column;
  height: 100vh;
  overflow: hidden;
  white-space: nowrap;
}

/* title bar */
.titlebar {
  display: grid;
  grid-template-columns: 1fr auto 1fr;
  align-items: center;
  height: 54px;
  flex: none;
  background: #e8e8e8;
}

.title {
  grid-column: 2;
}

.winbtns {
  display: flex;
  align-items: center;
  justify-content: flex-end;
  gap: 20px;
  padding-right: 13px;
}

.winbtns button {
  width: 28px;
  height: 28px;
}

.winbtns .close {
  border-radius: 50%;
  background: #1077e0;
}

/* menus and toolbars */
.menubar {
  display: flex;
  gap: 17px;
  height: 30px;
  flex: none;
  padding: 0 8px;
  border-bottom: 1px solid #d9d8d6;
}

.toolbar {
  display: flex;
  align-items: center;
  flex: none;
}

.commands {
  height: 42px;
  padding-left: 4px;
}

.options {
  height: 44px;
  padding-left: 4px;
}

.tool {
  width: 44px;
  height: 34px;
  flex: none;
  border-radius: 5px;
}

.tool.on, .lockbtn {
  background: #cdc7c2;
}

.toolbar .tool {
  margin: 0 2px;
}

.toolbar .sep {
  width: 1px;
  height: 34px;
  margin: 0 2px;
  background: #d5d3d0;
}

.spin {
  display: flex;
  align-items: center;
  margin-left: 9px;
  color: #929595;
}

.spin > span:first-child {
  min-width: 13px;
}

.box {
  display: flex;
  width: 141px;
  height: 36px;
  border: 1px solid #cdc7c2;
  border-radius: 5px;
  background: #faf9f8;
  overflow: hidden;
}

.box input {
  width: 89px;
  min-width: 0;
  padding: 0 0 0 7px;
  border: none;
  background: none;
}

.box button {
  width: 25px;
  flex: none;
  border-left: 1px solid #e8e6e3;
  color: #e6e5e3;
}

.lockbtn {
  width: 36px;
  height: 34px;
  margin-left: 4px;
  border-radius: 5px;
}

.unit {
  width: 62px;
  height: 36px;
  margin-left: 6px;
  padding: 0 9px;
  border: 1px solid #cdc7c2;
  border-radius: 5px;
  appearance: none;
  background: #faf9f8 url("data:image/svg+xml,%3Csvg xmlns='http://www.w3.org/2000/svg' viewBox='0 0 10 6'%3E%3Cpath d='M0 0h10L5 6z' fill='%232e3436'/%3E%3C/svg%3E") no-repeat right 12px center / 10px 6px;
}

/* work area */
.main {
  display: flex;
  flex: 1;
  min-height: 0;
}

.toolbox {
  display: flex;
  flex-direction: column;
  width: 39px;
  padding: 1px 0 0 2px;
  margin-bottom: 1px;
  border-right: 1px solid #c6c4c0;
  overflow: hidden;
}

.toolbox .tool {
  width: 34px;
}

.toolbox .sep {
  height: 1px;
  flex: none;
  margin: 1px 2px 1px 0;
  background: #d5d3d0;
}

.desk {
  display: grid;
  grid-template-columns: 24px 1fr 26px;
  grid-template-rows: 30px 24px 1fr 24px;
  flex: 1;
  min-width: 0;
  padding: 0 0 1px 5px;
}

.tabs {
  display: flex;
  grid-column: 1 / -1;
}

.tab {
  display: flex;
  align-items: center;
  gap: 8px;
  padding: 0 7px 2px 7px;
}

.tab.active {
  padding-bottom: 0;
  border-bottom: 2px solid #3584e4;
}

.tab button, .ptab button {
  width: 14px;
  color: #858886;
  font-weight: bold;
}

.guidelock, .display, .corner {
  background: #fbfafa;
}

.display {
  border: 1px solid #cdc7c2;
  border-radius: 4px;
}

.hruler {
  position: relative;
  display: flex;
  overflow: hidden;
  padding-left: 55px;
  background:
    linear-gradient(90deg, #aaa 1px, transparent 1px) 52px 100% / 250px 11px repeat-x,
    linear-gradient(90deg, #c0c0be 1px, transparent 1px) 52px 100% / 50px 9px repeat-x,
    linear-gradient(90deg, #c4c4c2 1px, transparent 1px) 52px 100% / 25px 5px repeat-x,
    linear-gradient(90deg, #c9c9c7 1px, transparent 1px) 52px 100% / 5px 3px repeat-x,
    linear-gradient(#fff, #fff) 52px 0 / 1123px 100% no-repeat,
    #f4f3f1;
  color: #888a88;
  font-size: 15px;
}

.hruler span {
  width: 250px;
  flex: none;
}

.vruler {
  position: relative;
  overflow: hidden;
  padding-top: 4px;
  background:
    linear-gradient(#aaa 1px, transparent 1px) 100% 1px / 11px 100px repeat-y,
    linear-gradient(#c0c0be 1px, transparent 1px) 100% 1px / 9px 50px repeat-y,
    linear-gradient(#c6c6c4 1px, transparent 1px) 100% 1px / 5px 10px repeat-y,
    linear-gradient(#fff, #fff) 0 0 / 100% 695px no-repeat,
    #f4f3f1;
  color: #888a88;
  font-size: 15px;
}

.vruler span {
  display: block;
  width: 24px;
  height: 100px;
  writing-mode: vertical-rl;
  transform: rotate(180deg);
  text-align: right;
}

.hmark {
  position: absolute;
  left: 599px;
  bottom: 0;
  width: 10px;
  height: 5px;
}

.vmark {
  position: absolute;
  top: 389px;
  right: 0;
  width: 5px;
  height: 10px;
}

.canvas {
  position: relative;
  background: #fff;
}

.cursor {
  position: absolute;
  left: 603px;
  top: 392px;
  width: 12px;
  height: 19px;
}

.vscroll, .hscroll {
  background: #cdcdcd;
}

.vscroll {
  padding: 313px 9px 0;
}

.vscroll div {
  height: 212px;
  border-radius: 4px;
  background: #7e8281;
}

.hscroll {
  grid-column: 1 / 3;
  padding: 8px 396px 0 423px;
}

.hscroll div {
  height: 8px;
  border-radius: 4px;
  background: #7e8281;
}

.corner {
  display: flex;
  align-items: center;
  justify-content: center;
}

.corner i {
  width: 4px;
  height: 4px;
  border-radius: 50%;
  background: #000;
}

.splitter {
  display: flex;
  flex-direction: column;
  align-items: center;
  justify-content: center;
  gap: 1px;
  width: 10px;
  margin-bottom: 1px;
  border: solid #b4b2af;
  border-width: 0 1px;
}

.splitter i {
  width: 3px;
  height: 2px;
  background: #333;
}

/* layers panel */
.panel {
  display: flex;
  flex-direction: column;
  width: 390px;
  flex: none;
  margin: 4px 12px 7px 1px;
  background: #c4eaf5;
  color: #23454f;
}

.ptabs {
  display: flex;
  height: 44px;
  padding-left: 3px;
  border-bottom: 1px solid #a3c8d2;
}

.ptab {
  display: flex;
  align-items: center;
  gap: 4px;
  width: 206px;
  padding: 3px 0 0 4px;
  border-right: 1px solid #b3dce7;
  border-bottom: 3px solid #2b8de8;
  background: #ccf4fe;
}

.ptab button {
  color: #6f9099;
}

.plus {
  width: 42px;
}

.more {
  width: 34px;
  margin-left: auto;
}

.ptools {
  display: flex;
  height: 39px;
  align-items: flex-start;
  padding-top: 1px;
  color: #002b36;
}

.ptools button {
  width: 36px;
  height: 34px;
}

.psep {
  width: 1px;
  height: 34px;
  margin-left: 4px;
  background: #a9d0db;
}

.ptools .cog {
  width: 45px;
}

.search {
  display: flex;
  flex: 1;
  min-width: 0;
  align-items: center;
  height: 34px;
  padding-left: 3px;
  border: 1px solid #a3c8d2;
  border-radius: 5px;
  background: #ccf4fe;
  color: #4b6e78;
}

.search input {
  width: 100%;
  min-width: 0;
  border: none;
  background: none;
}

.list {
  flex: 1;
  border: 1px solid #9cc4cf;
  background: #ccf4fe;
  color: #07303c;
}

.row {
  display: flex;
  justify-content: space-between;
  height: 25px;
  padding: 0 1px 0 46px;
  background: #79c0f3;
}

.row i {
  width: 7px;
  border-left: 1px solid #a6d6f5;
  background: #5aa4d9;
}

.snapbar {
  display: flex;
  flex-direction: column;
  width: 44px;
  flex: none;
  padding-top: 4px;
  margin-right: 10px;
}

.snapbar .sep {
  height: 1px;
  flex: none;
  margin: 3px 0;
  background: #d5d3d0;
}

.snapbar .sep.wide {
  margin: 5px 0 3px;
}

/* palette */
.palette {
  display: flex;
  justify-content: space-between;
  height: 35px;
  flex: none;
  padding: 1px 1px 0;
}

.swatches {
  display: grid;
  grid-template-columns: repeat(83, 16px);
  grid-auto-rows: 16px;
  gap: 1px;
}

.swatch {
  border: 1px solid rgba(0, 0, 0, 0.08);
}

.palbtns {
  display: flex;
  align-items: center;
}

.palbtns .off {
  color: #c4c3c1;
}

.palbtns .pdown {
  margin: 0 4px 0 7px;
  color: #000;
}

.palbtns .burger {
  width: 36px;
  height: 34px;
  border: 1px solid #cdc7c2;
  border-radius: 5px;
  background: #fbfafa;
}

/* status bar */
.status {
  display: flex;
  align-items: center;
  height: 45px;
  flex: none;
  padding: 2px 15px 0 0;
  border-bottom: 1px solid #2e3436;
}

.style {
  display: grid;
  grid-template-columns: 58px 89px;
  column-gap: 30px;
  line-height: 21px;
}

.style span:nth-child(odd) {
  text-align: right;
}

.field {
  display: flex;
  align-items: center;
  height: 36px;
  border: 1px solid #cdc7c2;
  border-radius: 2px;
  background: #fff;
}

.field input {
  min-width: 0;
  padding: 0;
  border: none;
  background: none;
}

.field em {
  font-style: normal;
  color: #929595;
}

.opacity {
  width: 86px;
  padding-left: 2px;
  gap: 3px;
  color: #929595;
}

.opacity input {
  width: 33px;
}

.opacity em {
  color: #c2c3c3;
}

.layer {
  height: 22px;
  margin: 0 20px 0 10px;
  padding-left: 6px;
  border-left: 3px solid #729fcf;
}

.eye {
  margin-right: 21px;
}

.ssep {
  width: 1px;
  height: 33px;
  margin: 0 6px 0 8px;
  background: #d5d3d0;
}

.coords {
  margin-left: auto;
}

.coords + .ssep {
  margin: 0 7px 0 10px;
}

.cam {
  width: 35px;
}

.zoomf {
  width: 105px;
  padding-left: 3px;
  gap: 9px;
}

.zoomf svg {
  color: #999;
}

.zoomf input {
  width: 32px;
  margin-right: -9px;
}

.rotf {
  width: 94px;
  margin-left: 10px;
  padding-left: 2px;
  gap: 20px;
}

.rotf input {
  width: 11px;
  margin-right: -20px;
}
```
FILE: script.js
```javascript
// "|" is a separator, "||" a wider one, "*" marks a pressed button
document.querySelectorAll('[data-icons]').forEach(bar => {
  bar.dataset.icons.split(' ').forEach(name => {
    if (name[0] === '|') {
      const sep = document.createElement('span');
      sep.className = name === '||' ? 'sep wide' : 'sep';
      bar.appendChild(sep);
      return;
    }
    const id = name.replace('*', '');
    const button = document.createElement('button');
    button.className = name.endsWith('*') ? 'tool on' : 'tool';
    button.setAttribute('aria-label', id);
    button.innerHTML = '<svg class="icon"><use href="#' + id + '"/></svg>';
    bar.appendChild(button);
  });
});

function addLabels(id, from, to, step) {
  const ruler = document.getElementById(id);
  for (let n = from; n <= to; n += step) {
    const span = document.createElement('span');
    span.textContent = n;
    ruler.appendChild(span);
  }
}
addLabels('hruler', 0, 1250, 250);
addLabels('vruler', 100, 800, 100);

const colors = [
  'none 000000 1a1a1a 333333 4d4d4d 666666 999999 b3b3b3 cccccc e6e6e6 ececec f2f2f2 f9f9f9 800000 ff0000 808000 ffff00 008000 00ff00 008080 00ffff 000080 0000ff 800080 ff00ff 2b0000 550000 800000 aa0000 d40000 ff0000 ff2a2a ff5555 ff8080 ffaaaa ffd5d5 280b0b 501616 782121 a02c2c c83737 d35f5f de8787 e9afaf f4d7d7 241c1c 483737 6c5353 916f6f ac9393 c8b7b7 e3dbdb 2b1100 552200 803300 aa4400 d45500 ff6600 ff7f2a ff9955 ffb380 ffccaa ffe6d5 28170b 502d16 784421 a05a2c c87137 d38d5f deaa87 e9c6af f4e3d7 241f1c 483e37 6c5d53 917c6f ac9d93 c8beb7 e3dedb 2b2200 554400 806600 aa8800',
  '808080 ffffff d4aa00 ffcc00 ffd42a ffdd55 ffe680 ffeeaa fff6d5 28220b 504416 786721 a0892c c8ab37 d3bc5f decd87 e9ddaf f4eed7 24221c 484537 6c6753 918a6f aca793 c8c4b7 e3e2db 222b00 445500 668000 88aa00 aad400 ccff00 d4ff2a ddff55 e5ff80 eeffaa f6ffd5 22280b 445016 677821 89a02c abc837 bcd35f cdde87 dde9af eef4d7 22241c 454837 676c53 8a916f a7ac93 c4c8b7 e2e3db 112b00 225500 338000 44aa00 55d400 66ff00 7fff2a 99ff55 b3ff80 ccffaa e5ffd5 17280b 2d5016 447821 5aa02c 71c837 8dd35f aade87 c6e9af e3f4d7 1f241c 3e4837 5d6c53 7c916f 9dac93 bec8b7 dee3db 002b00 005500 008000 00aa00'
];
const swatches = document.getElementById('swatches');
colors.join(' ').split(' ').forEach(color => {
  const button = document.createElement('button');
  button.className = 'swatch';
  button.setAttribute('aria-label', color);
  if (color === 'none') {
    button.style.background = '#fff';
    button.innerHTML = '<svg width="14" height="14" viewBox="0 0 14 14"><path d="M0 0l14 14M14 0L0 14" stroke="#c01c38" stroke-width="1.5"/></svg>';
  } else {
    button.style.background = '#' + color;
  }
  swatches.appendChild(button);
});
```
